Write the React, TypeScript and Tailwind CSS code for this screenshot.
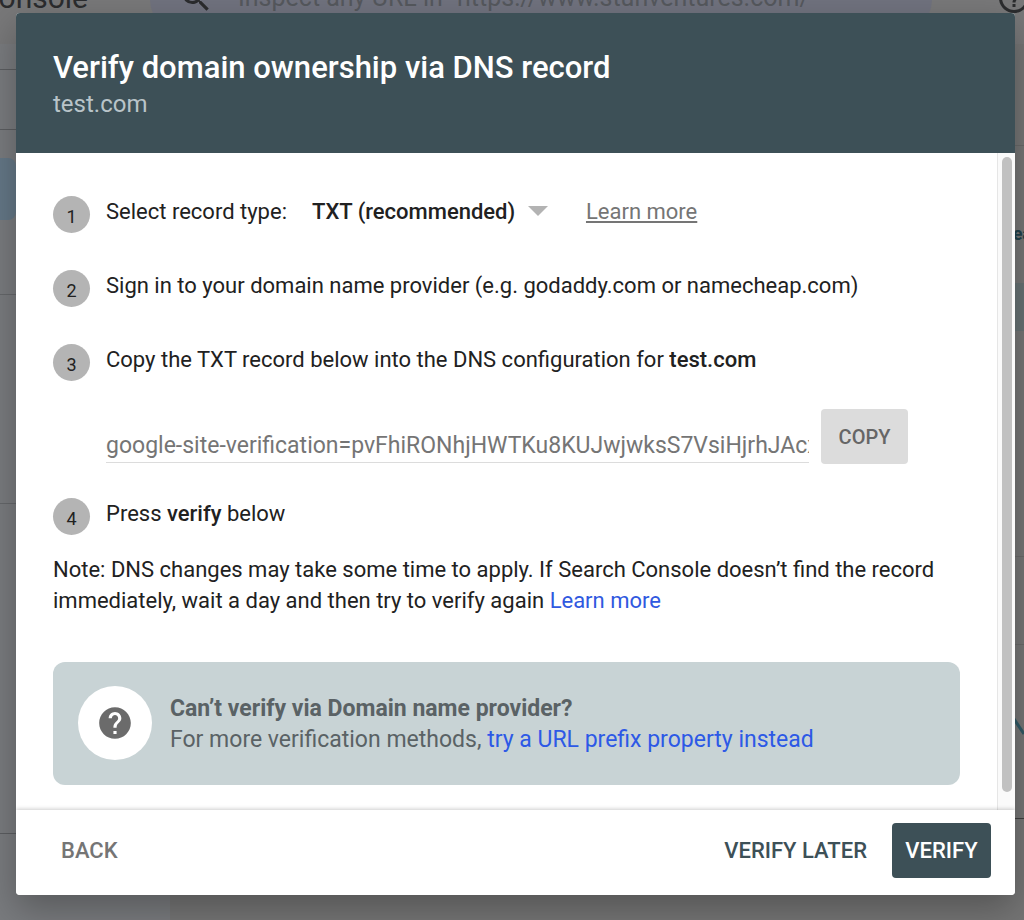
import { useState } from 'react'
import type { ReactNode } from 'react'

const TXT_RECORD = 'google-site-verification=pvFhiRONhjHWTKu8KUJwjwksS7VsiHjrhJAcx7'

const RECORD_TYPES = [
  { value: 'txt', label: 'TXT (recommended)' },
  { value: 'cname', label: 'CNAME' }
]

interface StepProps {
  number: number
  children: ReactNode
}

function Step({ number, children }: StepProps) {
  return (
    <li className="flex items-start gap-4">
      <span className="flex h-[37px] w-[37px] shrink-0 items-center justify-center rounded-full bg-[#b4b4b4] pt-1 text-lg">
        {number}
      </span>
      <div className="leading-8">{children}</div>
    </li>
  )
}

function HelpIcon() {
  return (
    <svg viewBox="0 0 24 24" className="h-[38px] w-[38px] fill-[#6b6b6b]" aria-hidden="true">
      <path d="M12 2C6.48 2 2 6.48 2 12s4.48 10 10 10 10-4.48 10-10S17.52 2 12 2zm1 17h-2v-2h2v2zm2.07-7.75l-.9.92C13.45 12.9 13 13.5 13 15h-2v-.5c0-1.1.45-2.1 1.17-2.83l1.24-1.26c.37-.36.59-.86.59-1.41 0-1.1-.9-2-2-2s-2 .9-2 2H8c0-2.21 1.79-4 4-4s4 1.79 4 4c0 .88-.36 1.68-.93 2.25z" />
    </svg>
  )
}

// Dimmed console page behind the dialog
function ConsolePage() {
  return (
    <div className="absolute inset-0 flex flex-col overflow-hidden bg-[#757575] text-[#2b2c2e]" aria-hidden="true">
      <div className="-mt-12 flex h-[92px] shrink-0 items-center bg-[#787879]">
        <div className="flex w-[150px] shrink-0 justify-end pr-[62px] text-3xl">Console</div>
        <div className="flex h-[74px] flex-1 items-center gap-6 rounded-[36px] bg-[#70727e] pl-7 text-[#55585d]">
          <svg viewBox="0 0 24 24" className="h-9 w-9 fill-[#2b2c2e]">
            <path d="M15.5 14h-.79l-.28-.27A6.47 6.47 0 0 0 16 9.5 6.5 6.5 0 1 0 9.5 16c1.61 0 3.09-.59 4.23-1.57l.27.28v.79l5 4.99L20.49 19l-4.99-5zm-6 0C7.01 14 5 11.99 5 9.5S7.01 5 9.5 5 14 7.01 14 9.5 11.99 14 9.5 14z" />
          </svg>
          <span className="text-[25px] leading-8 whitespace-nowrap">Inspect any URL in "https://www.stunventures.com/"</span>
        </div>
        <div className="flex w-[92px] shrink-0 justify-end">
          <svg viewBox="0 0 24 24" className="-mr-2 h-9 w-9 fill-[#2b2c2e]">
            <path d="M11 18h2v-2h-2v2zm1-16C6.48 2 2 6.48 2 12s4.48 10 10 10 10-4.48 10-10S17.52 2 12 2zm0 18c-4.41 0-8-3.59-8-8s3.59-8 8-8 8 3.59 8 8-3.59 8-8 8zm0-14c-2.21 0-4 1.79-4 4h2c0-1.1.9-2 2-2s2 .9 2 2c0 2-3 1.75-3 5h2c0-2.25 3-2.5 3-5 0-2.21-1.79-4-4-4z" />
          </svg>
        </div>
      </div>
      <div className="flex flex-1">
        <div className="w-[170px] bg-[#797b7e]">
          <div className="mt-[25px] h-[61px] border-y border-[#5b5d60]" />
          <div className="mt-7 h-[62px] w-4 rounded-r-lg bg-[#647786]" />
          <div className="h-[75px] border-b border-[#65676a]" />
          <div className="h-[209px] border-b border-[#65676a]" />
          <div className="h-[330px] border-b border-[#5b5d60]" />
        </div>
        <div className="flex-1">
          <div className="h-[102px] border-b border-[#696969]" />
          <div className="-mr-2 mt-[74px] text-right text-lg leading-7 font-bold text-[#20404a]">Area</div>
          <div className="mt-[35px] h-12 bg-[#667173]" />
          <div className="h-[226px] border-b border-[#696969]" />
          <div className="h-[88px] border-b border-[#696969]" />
          <div className="flex h-[174px] items-center justify-end border-b border-[#3f3f3f]">
            <svg viewBox="0 0 16 28" className="h-7 w-4 fill-none stroke-[#2f5864]" strokeWidth="3">
              <path d="M0 -8L16 16" />
            </svg>
          </div>
        </div>
      </div>
    </div>
  )
}

export default function App() {
  const [recordType, setRecordType] = useState('txt')

  return (
    <div className="relative flex min-h-screen overflow-hidden pt-[13px] pr-[9px] pb-[25px] pl-4 font-[Roboto,'Liberation_Sans',sans-serif]">
      <ConsolePage />

      <div
        role="dialog"
        aria-labelledby="dialog-title"
        className="relative flex flex-1 flex-col overflow-hidden rounded bg-white text-[22px] text-[#212121] shadow-[0_14px_36px_0_rgba(0,0,0,0.28)]"
      >
        <header className="bg-[#3d5057] px-[37px] pt-9 pb-[31px]">
          <h1 id="dialog-title" className="text-[31px] leading-[37px] font-medium text-white">
            Verify domain ownership via DNS record
          </h1>
          <p className="text-2xl leading-9 text-[#b9c4c9]">test.com</p>
        </header>

        <div className="flex flex-1">
          <main className="min-w-0 flex-1 pt-[43px] pr-[37px] pb-[25px] pl-[37px]">
            <ol className="flex flex-col gap-[37px]">
              <Step number={1}>
                <div className="flex items-center">
                  <label htmlFor="record-type">Select record type:</label>
                  <div className="relative ml-[25px]">
                    <select
                      id="record-type"
                      value={recordType}
                      onChange={(e) => setRecordType(e.target.value)}
                      className="block appearance-none bg-transparent pr-8 leading-8 font-medium"
                    >
                      {RECORD_TYPES.map((t) => <option key={t.value} value={t.value}>{t.label}</option>)}
                    </select>
                    <svg viewBox="0 0 20 10" className="pointer-events-none absolute top-2.5 right-0 h-2.5 w-5 fill-[#b3b3b3]" aria-hidden="true">
                      <path d="M0 0h20L10 10z" />
                    </svg>
                  </div>
                  <a href="#record-types" className="ml-[38px] text-[#757575] underline">Learn more</a>
                </div>
              </Step>
              <Step number={2}>Sign in to your domain name provider (e.g. godaddy.com or namecheap.com)</Step>
              <Step number={3}>
                Copy the TXT record below into the DNS configuration for <b className="font-medium">test.com</b>
              </Step>
            </ol>

            <div className="mt-7 flex pr-[52px] pl-[53px]">
              <input
                type="text"
                readOnly
                aria-label="TXT record"
                value={TXT_RECORD}
                className="mb-px min-w-0 flex-1 self-end border-b border-[#dcdcdc] text-[23px] leading-8 text-[#757575] outline-none"
              />
              <button type="button" className="ml-3 h-[55px] w-[87px] rounded bg-[#dcdcdc] text-xl font-medium text-[#666]">
                COPY
              </button>
            </div>

            <ol start={4} className="mt-[34px]">
              <Step number={4}>
                Press <b className="font-medium">verify</b> below
              </Step>
            </ol>

            <p className="mt-[19px] leading-[31px]">
              Note: DNS changes may take some time to apply. If Search Console doesn’t find the record
              immediately, wait a day and then try to verify again{' '}
              <a href="#verify-help" className="text-[#3059e0]">Learn more</a>
            </p>

            <div className="mt-[46px] flex items-start gap-[18px] rounded-xl bg-[#c8d3d5] px-[25px] pt-6 pb-[25px] text-[23px] leading-[31px] text-[#5a6265]">
              <div className="flex h-[74px] w-[74px] shrink-0 items-center justify-center rounded-full bg-white">
                <HelpIcon />
              </div>
              <div className="pt-[7px]">
                <p className="font-bold">Can’t verify via Domain name provider?</p>
                <p>
                  For more verification methods,{' '}
                  <a href="#url-prefix" className="text-[#2d59e6]">try a URL prefix property instead</a>
                </p>
              </div>
            </div>
          </main>

          {/* Scroll track */}
          <div className="flex w-[18px] justify-center border-l border-[#e6e6e6] bg-[#fafafa] pt-1 pb-[18px]">
            <div className="w-2.5 rounded-full bg-[#c1c1c1]" />
          </div>
        </div>

        <footer className="relative flex items-center bg-white pt-[13px] pr-6 pb-[17px] pl-[45px] font-medium shadow-[0_-1px_4px_rgba(0,0,0,0.2)]">
          <button type="button" className="text-[#757575]">BACK</button>
          <button type="button" className="ml-auto text-[#3d5057]">VERIFY LATER</button>
          <button type="button" className="ml-[25px] h-[55px] w-[99px] rounded bg-[#3d5057] text-white">VERIFY</button>
        </footer>
      </div>
    </div>
  )
}
